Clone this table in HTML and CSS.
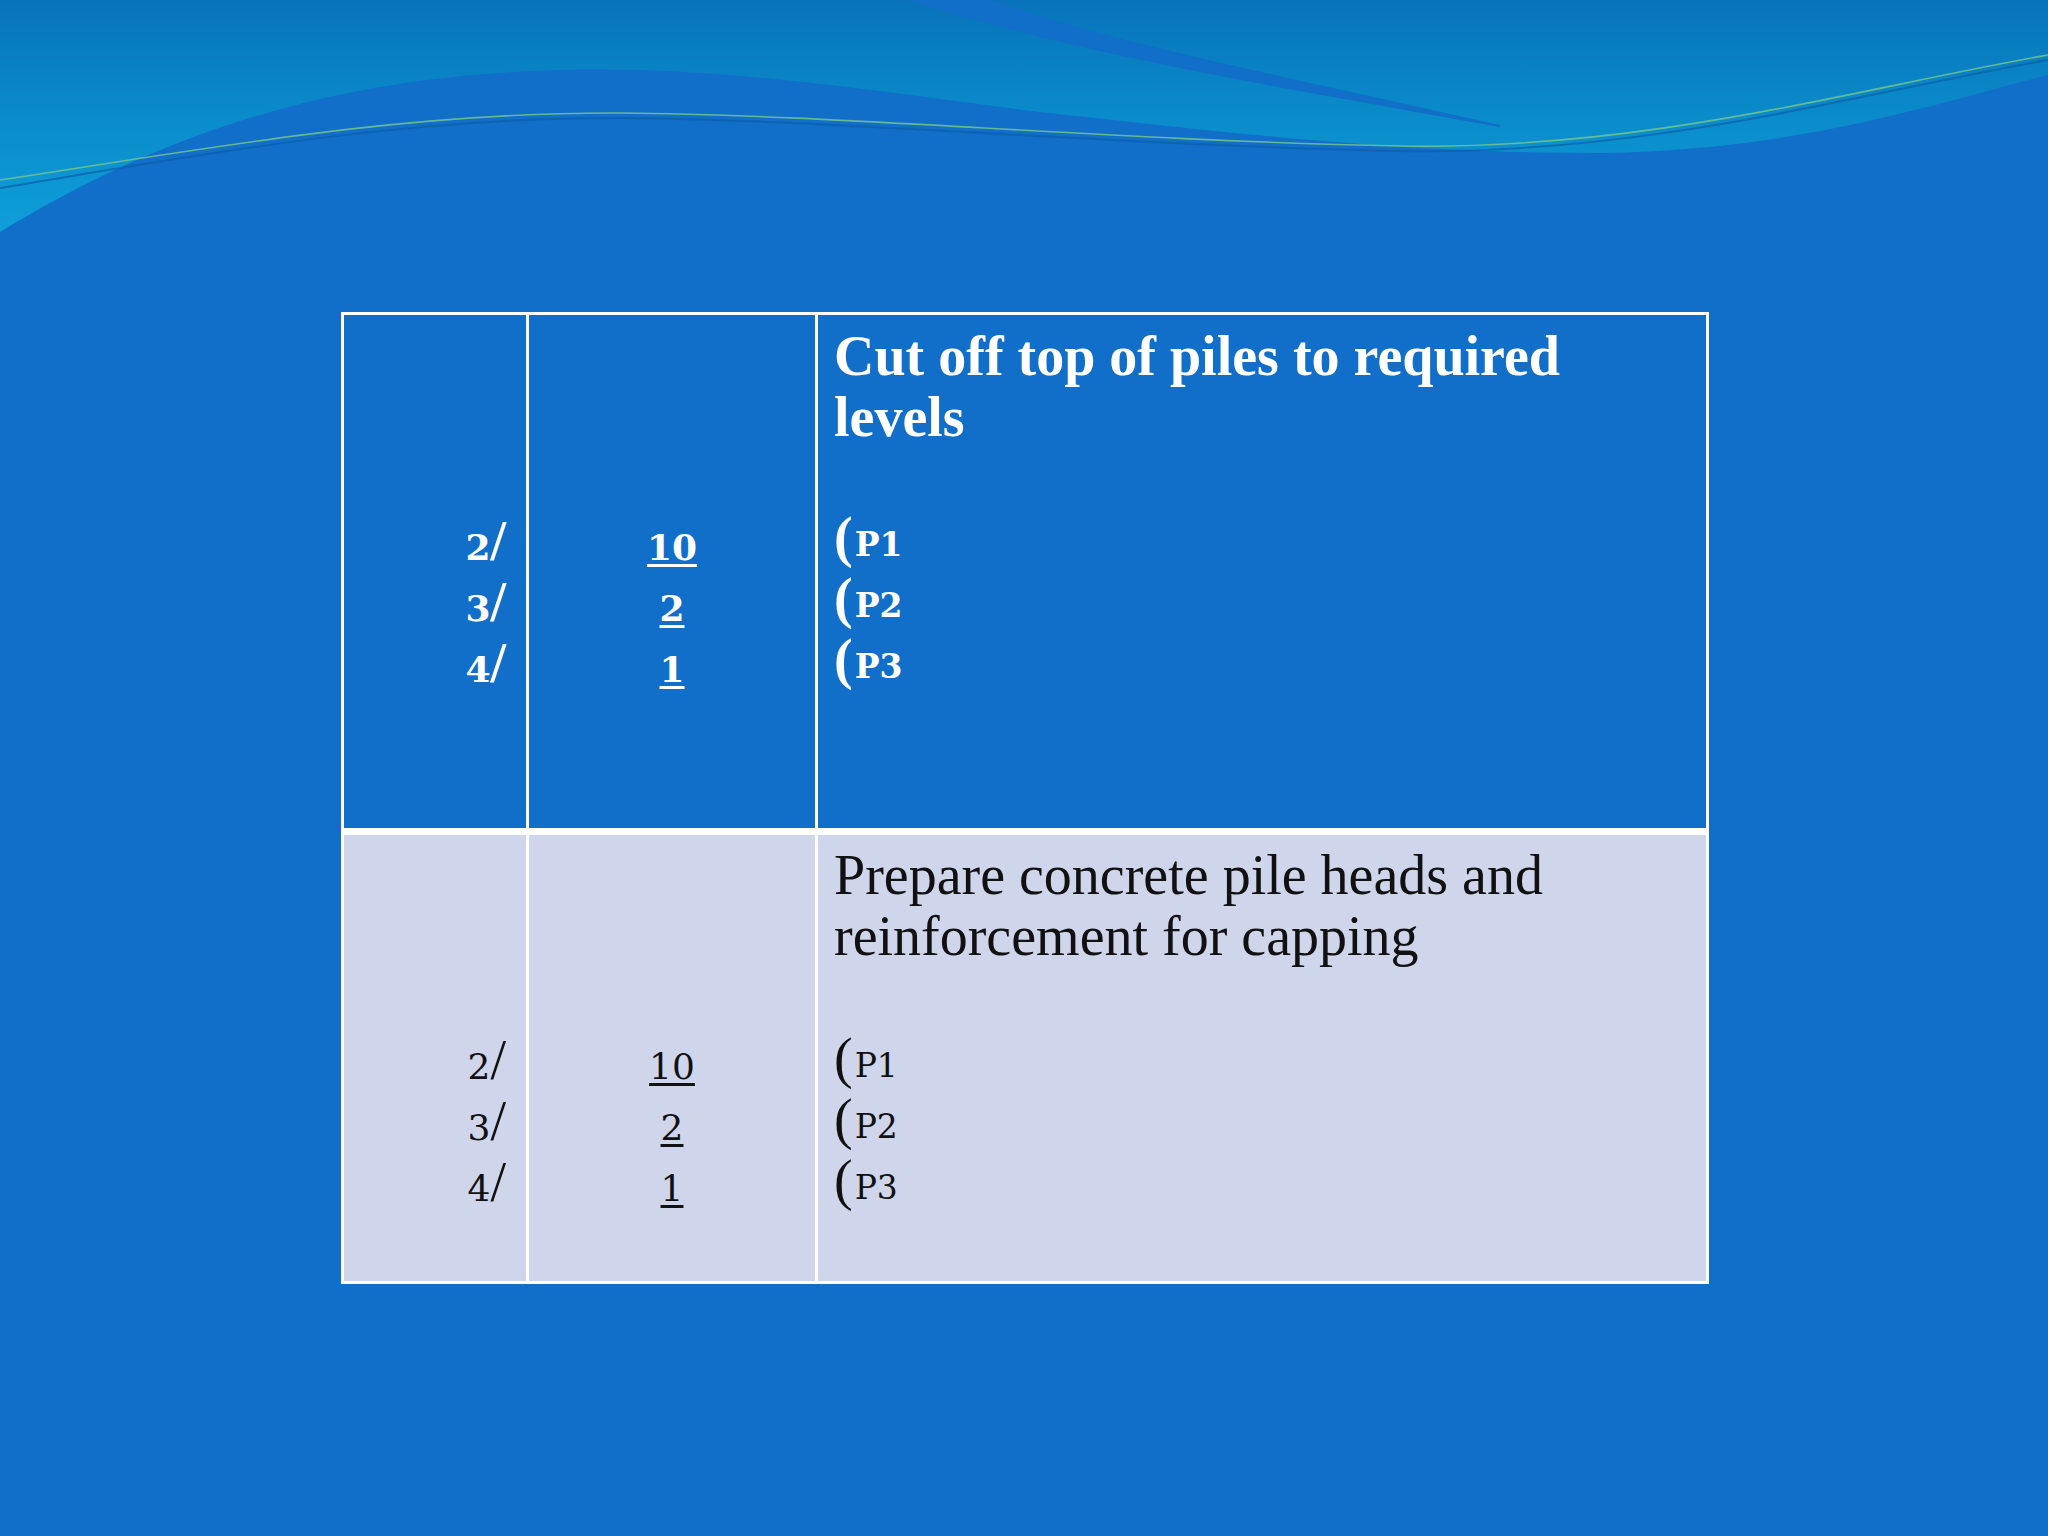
FILE: index.html
```html
<!DOCTYPE html>
<html lang="en">
<head>
<meta charset="utf-8">
<title>Pile cutting measurement</title>
<link rel="stylesheet" href="styles.css">
</head>
<body>
<div class="slide">
  <svg class="wave" width="2048" height="240" viewBox="0 0 2048 240" aria-hidden="true">
    <defs>
      <linearGradient id="sky" x1="0" y1="0" x2="0" y2="1">
        <stop offset="0" stop-color="#0873ba"/>
        <stop offset="0.45" stop-color="#0a89c9"/>
        <stop offset="1" stop-color="#0e9fd9"/>
      </linearGradient>
    </defs>
    <rect class="wave-bg" x="0" y="0" width="2048" height="240"/>
    <path fill="url(#sky)" d="M0,0 L2048,0 L2048,75 C1930,105 1800,150 1600,153 C1400,153 1250,135 1040,112 C850,88 720,66 560,70 C380,75 200,110 0,232 Z"/>
    <path class="stripe" d="M907,0 L993,0 C1100,40 1300,80 1500,125 L1500,127 C1300,90 1100,60 907,0 Z"/>
    <path class="line-dark" d="M0,188 C200,155 400,117 620,118 C850,120 1100,145 1400,151 C1650,155 1850,95 2048,60"/>
    <path class="line-green" d="M0,180 C200,150 400,112 620,113 C850,115 1100,140 1400,146 C1650,150 1850,90 2048,55"/>
  </svg>

  <div class="boq">
    <div class="cell r1 times">
      <div class="ln"><span class="fig">2</span>/</div>
      <div class="ln"><span class="fig">3</span>/</div>
      <div class="ln"><span class="fig">4</span>/</div>
    </div>
    <div class="cell r1 dims">
      <div class="ln"><span class="fig ul">10</span></div>
      <div class="ln"><span class="fig ul">2</span></div>
      <div class="ln"><span class="fig ul">1</span></div>
    </div>
    <div class="cell r1 desc">
      <p class="title">Cut off top of piles to required levels</p>
      <div class="ln">(<span class="sm">P1</span></div>
      <div class="ln">(<span class="sm">P2</span></div>
      <div class="ln">(<span class="sm">P3</span></div>
    </div>

    <div class="cell r2 times">
      <div class="ln"><span class="fig">2</span>/</div>
      <div class="ln"><span class="fig">3</span>/</div>
      <div class="ln"><span class="fig">4</span>/</div>
    </div>
    <div class="cell r2 dims">
      <div class="ln"><span class="fig ul">10</span></div>
      <div class="ln"><span class="fig ul">2</span></div>
      <div class="ln"><span class="fig ul">1</span></div>
    </div>
    <div class="cell r2 desc">
      <p class="title">Prepare concrete pile heads and reinforcement for capping</p>
      <div class="ln">(<span class="sm">P1</span></div>
      <div class="ln">(<span class="sm">P2</span></div>
      <div class="ln">(<span class="sm">P3</span></div>
    </div>
  </div>
</div>
</body>
</html>
```

FILE: styles.css
```css
html, body {
  margin: 0;
  padding: 0;
  background: #116ec9;
}

.slide {
  width: 2048px;
  height: 1536px;
  overflow: hidden;
  background: #116ec9;
  font-family: "Liberation Serif", "Times New Roman", serif;
}

.wave {
  display: block;
}

.wave-bg,
.stripe {
  fill: #116ec9;
}

.line-green {
  fill: none;
  stroke: #74c68a;
  stroke-width: 1.6;
  opacity: 0.85;
}

.line-dark {
  fill: none;
  stroke: #0a5ea6;
  stroke-width: 2;
  opacity: 0.7;
}

.boq {
  margin: 72px 0 0 341px;
  width: 1368px;
  box-sizing: border-box;
  display: grid;
  grid-template-columns: 182px 286px 888px;
  grid-template-rows: 513px 446px;
  column-gap: 3px;
  row-gap: 7px;
  padding: 3px;
  background: #ffffff;
}

.cell {
  font-size: 56px;
  line-height: 61px;
  box-sizing: border-box;
}

.r1 {
  background: #116ec9;
  color: #ffffff;
  font-weight: bold;
}

.r2 {
  background: #cfd5ea;
  color: #111111;
  font-weight: normal;
}

.times {
  text-align: right;
  padding-right: 20px;
}

.dims {
  text-align: center;
}

.r1.times,
.r1.dims {
  padding-top: 196px;
}

.r2.times,
.r2.dims {
  padding-top: 195px;
}

.desc {
  padding: 11px 40px 0 16px;
}

.r2.desc {
  padding-top: 10px;
}

.title {
  margin: 0 0 61px 0;
}

.r1 .title {
  margin-bottom: 59px;
}

.ln {
  height: 61px;
  white-space: nowrap;
}

.fig {
  font-family: "DejaVu Serif", "Liberation Serif", serif;
  font-size: 36px;
  line-height: 1;
}

.ul {
  text-decoration: underline;
  text-decoration-thickness: 3px;
  text-underline-offset: 4px;
}

.r2 .ul {
  text-decoration-thickness: 2.5px;
}

.sm {
  font-family: "DejaVu Serif", "Liberation Serif", serif;
  font-size: 33px;
  line-height: 1;
  margin-left: 2px;
}
```
